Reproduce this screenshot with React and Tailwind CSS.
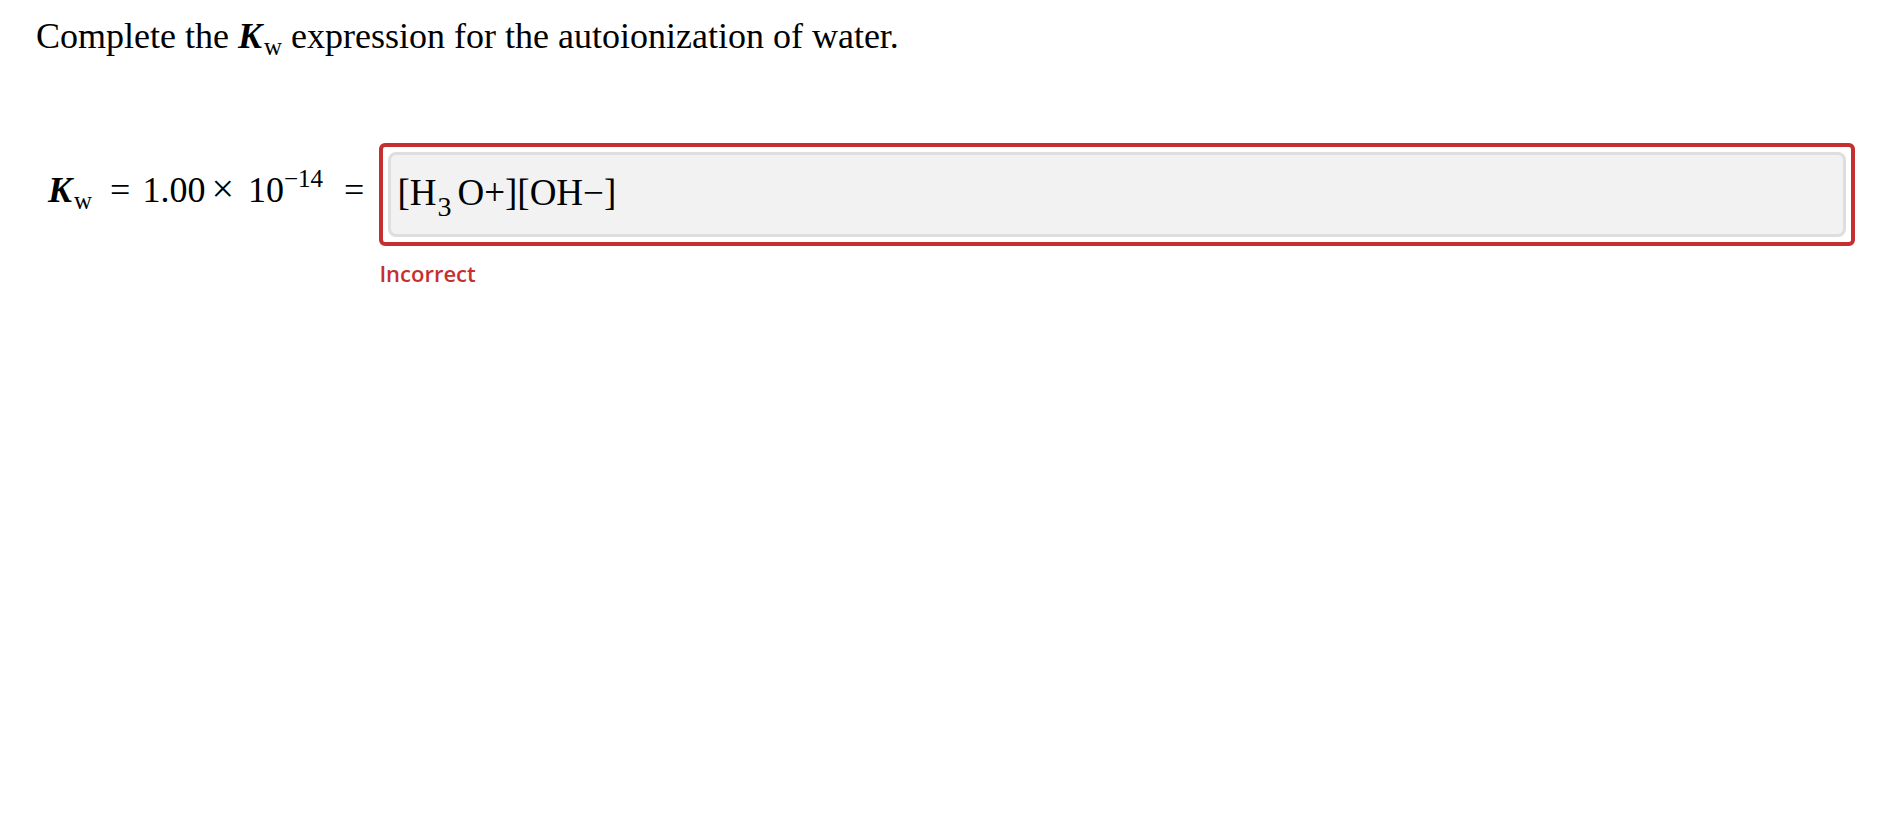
const serif = "font-['Liberation_Serif','Times_New_Roman',serif]";

function Kw() {
  return (
    <span className="whitespace-nowrap">
      <span className="italic font-bold">K</span>
      <span className="relative top-[7px] ml-[2px] text-[25px]">w</span>
    </span>
  );
}

export default function App() {
  return (
    <div className={`min-h-screen bg-white pl-[36px] pr-[34px] pt-[18px] text-black ${serif}`}>
      <p className="text-[36px] leading-[36px]">
        Complete the <Kw /> expression for the autoionization of water.
      </p>

      <div className="mt-[85px] flex items-start text-[36px] leading-[40px]">
        {/* left side of the equation, baseline lined up with the answer field */}
        <div className="ml-[12px] mt-[26px] flex items-baseline whitespace-nowrap">
          <Kw />
          <span className="ml-[18px]">=</span>
          <span className="ml-[12px]">1.00</span>
          <span className="ml-[6px] text-[40px] leading-[40px]">×</span>
          <span className="ml-[14px]">10</span>
          <span className="relative -top-[15px] text-[25px]">−14</span>
          <span className="ml-[21px]">=</span>
        </div>

        <div className="ml-[15px] flex-1">
          <div className="rounded-[6px] border-4 border-[#c62f2f] p-[5px]">
            <div className="flex h-[85px] items-center rounded-[8px] border-[3px] border-[#dedede] bg-[#f2f2f2] px-[6px]">
              <span className="whitespace-nowrap text-[37px]">
                [H<span className="relative top-[11px] ml-[1px] mr-[6px] text-[28px]">3</span>O+][OH−]
              </span>
            </div>
          </div>
          <div className="mt-[13px] font-['Open_Sans',sans-serif] text-[22px] font-semibold leading-[28px] text-[#c62f2f]">
            Incorrect
          </div>
        </div>
      </div>
    </div>
  );
}
